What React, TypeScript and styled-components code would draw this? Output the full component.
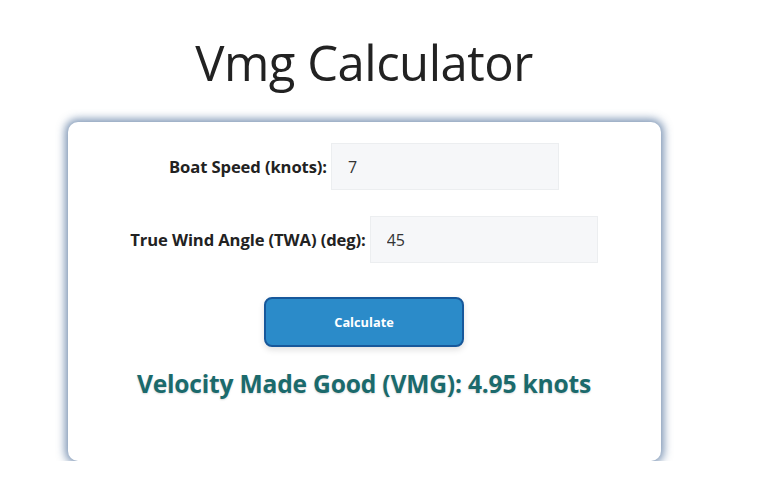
import React from "react";
import styled, { createGlobalStyle } from "styled-components";

const Global = createGlobalStyle`
  html, body { margin: 0; padding: 0; background: #ffffff; }
  body { font-family: "Open Sans", "Noto Sans", sans-serif; color: #222; }
`;

const Page = styled.div`
  width: 728px;
  display: flex;
  flex-direction: column;
  align-items: center;
  padding-top: 24px;
`;

const Title = styled.h1`
  margin: 0 0 22px;
  font-size: 49px;
  font-weight: 400;
  line-height: 76px;
  color: #222;
  letter-spacing: -0.5px;
`;

const Card = styled.div`
  box-sizing: border-box;
  width: 593px;
  height: 339px;
  background: #fff;
  border-radius: 10px;
  box-shadow: 0 0 9px 3px rgba(90, 120, 160, 0.78);
  padding: 21px 20px 0;
  display: flex;
  flex-direction: column;
  align-items: center;
`;

const Row = styled.div`
  display: flex;
  align-items: center;
  justify-content: center;
  gap: 4px;
  margin-bottom: 26px;
`;

const Label = styled.label`
  font-size: 16.6px;
  font-weight: 700;
  color: #222;
  letter-spacing: -0.1px;
`;

const Input = styled.input`
  box-sizing: border-box;
  width: 228px;
  height: 47px;
  background: #f6f7f9;
  border: 1px solid #eceef0;
  border-radius: 0;
  padding: 0 16px;
  font-family: inherit;
  font-size: 16px;
  color: #333;
  outline: none;
`;

const Button = styled.button`
  box-sizing: border-box;
  width: 200px;
  height: 50px;
  margin-top: 8px;
  background: #2b8bc9;
  border: 2px solid #17589b;
  border-radius: 8px;
  color: #fff;
  font-family: inherit;
  font-size: 12.8px;
  font-weight: 700;
  box-shadow: 0 3px 6px rgba(0, 0, 0, 0.12);
  cursor: pointer;
`;

const Result = styled.h2`
  margin: 20px 0 0;
  font-size: 24.6px;
  font-weight: 700;
  color: #1b6a6c;
  text-shadow: 0 1px 2px rgba(0, 0, 0, 0.15);
  letter-spacing: -0.2px;
`;

export default function App() {
  return (
    <>
      <Global />
      <Page>
        <Title>Vmg Calculator</Title>
        <Card>
          <Row>
            <Label htmlFor="speed">Boat Speed (knots):</Label>
            <Input id="speed" defaultValue="7" />
          </Row>
          <Row>
            <Label htmlFor="twa">True Wind Angle (TWA) (deg):</Label>
            <Input id="twa" defaultValue="45" />
          </Row>
          <Button>Calculate</Button>
          <Result>Velocity Made Good (VMG): 4.95 knots</Result>
        </Card>
      </Page>
    </>
  );
}
